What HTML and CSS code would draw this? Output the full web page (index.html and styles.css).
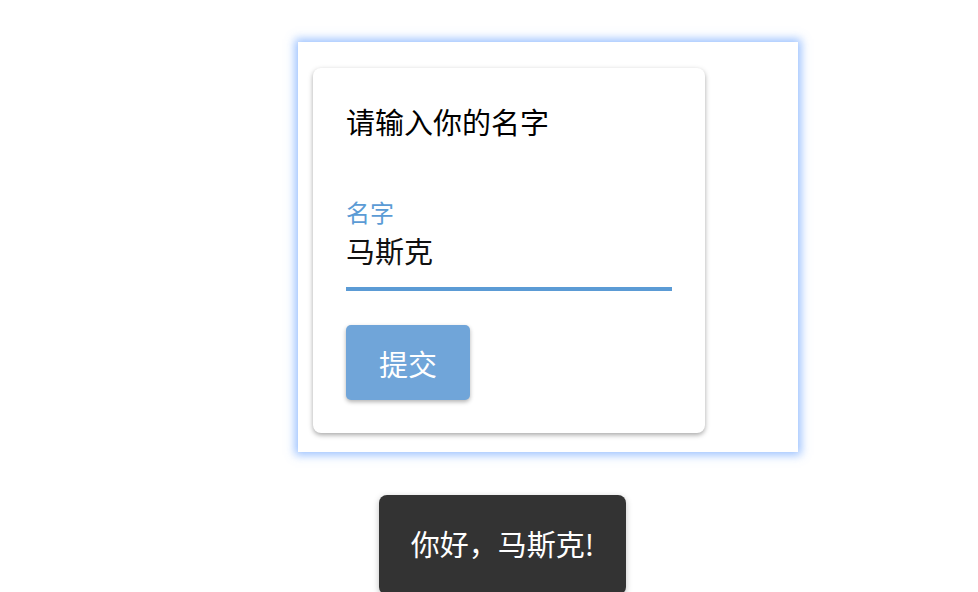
FILE: index.html
```html
<!DOCTYPE html>
<html lang="zh-CN">
<head>
    <meta charset="UTF-8">
    <meta name="viewport" content="width=device-width, initial-scale=1.0">
    <title>名字</title>
    <link rel="stylesheet" href="styles.css">
</head>
<body>
    <div class="stage">
        <form class="card">
            <h1 class="card-title">请输入你的名字</h1>

            <!-- Name field -->
            <label class="field">
                <span class="field-label">名字</span>
                <input class="field-input" type="text" value="马斯克">
            </label>

            <button type="button" class="submit">提交</button>
        </form>
    </div>

    <!-- Greeting toast -->
    <div class="toast">你好，马斯克!</div>
</body>
</html>
```

FILE: styles.css
```css
/* Reset some default browser styles */
* {
    box-sizing: border-box;
    margin: 0;
    padding: 0;
}

body {
    font-family: "Noto Sans CJK SC", "Noto Sans", sans-serif;
    background-color: #fff;
    color: #111;
    overflow: hidden;
}

.stage {
    width: 500px;
    height: 410px;
    margin: 42px 0 0 298px;
    padding: 26px 0 0 15px;
    background-color: #fff;
    box-shadow: 0 0 9px 3px rgba(110, 165, 255, 0.7);
}

.card {
    width: 392px;
    display: flex;
    flex-direction: column;
    align-items: flex-start;
    padding: 35px 33px 33px;
    background-color: #fff;
    border-radius: 8px;
    box-shadow: 0 2px 5px rgba(0, 0, 0, 0.35);
}

.card-title {
    font-size: 29px;
    line-height: 36px;
    font-weight: 400;
    color: #000;
}

.field {
    display: flex;
    flex-direction: column;
    width: 100%;
    margin-top: 58px;
    padding-bottom: 19px;
    border-bottom: 4px solid #5b9bd5;
}

.field-label {
    font-size: 24px;
    line-height: 30px;
    color: #5b9bd5;
}

.field-input {
    margin-top: 5px;
    border: none;
    outline: none;
    background: transparent;
    font-family: inherit;
    font-size: 29px;
    line-height: 36px;
    height: 36px;
    color: #111;
}

.submit {
    width: 124px;
    height: 75px;
    margin-top: 34px;
    background-color: #70a5d9;
    color: #fff;
    border: none;
    border-radius: 5px;
    font-family: inherit;
    font-size: 29px;
    box-shadow: 0 2px 4px rgba(0, 0, 0, 0.3);
    cursor: pointer;
}

.toast {
    width: 247px;
    height: 100px;
    margin: 43px 0 0 379px;
    padding-top: 27px;
    background-color: #333;
    color: #fff;
    border-radius: 8px;
    font-size: 29px;
    line-height: 42px;
    text-align: center;
    box-shadow: 0 2px 6px rgba(0, 0, 0, 0.25);
}
```
